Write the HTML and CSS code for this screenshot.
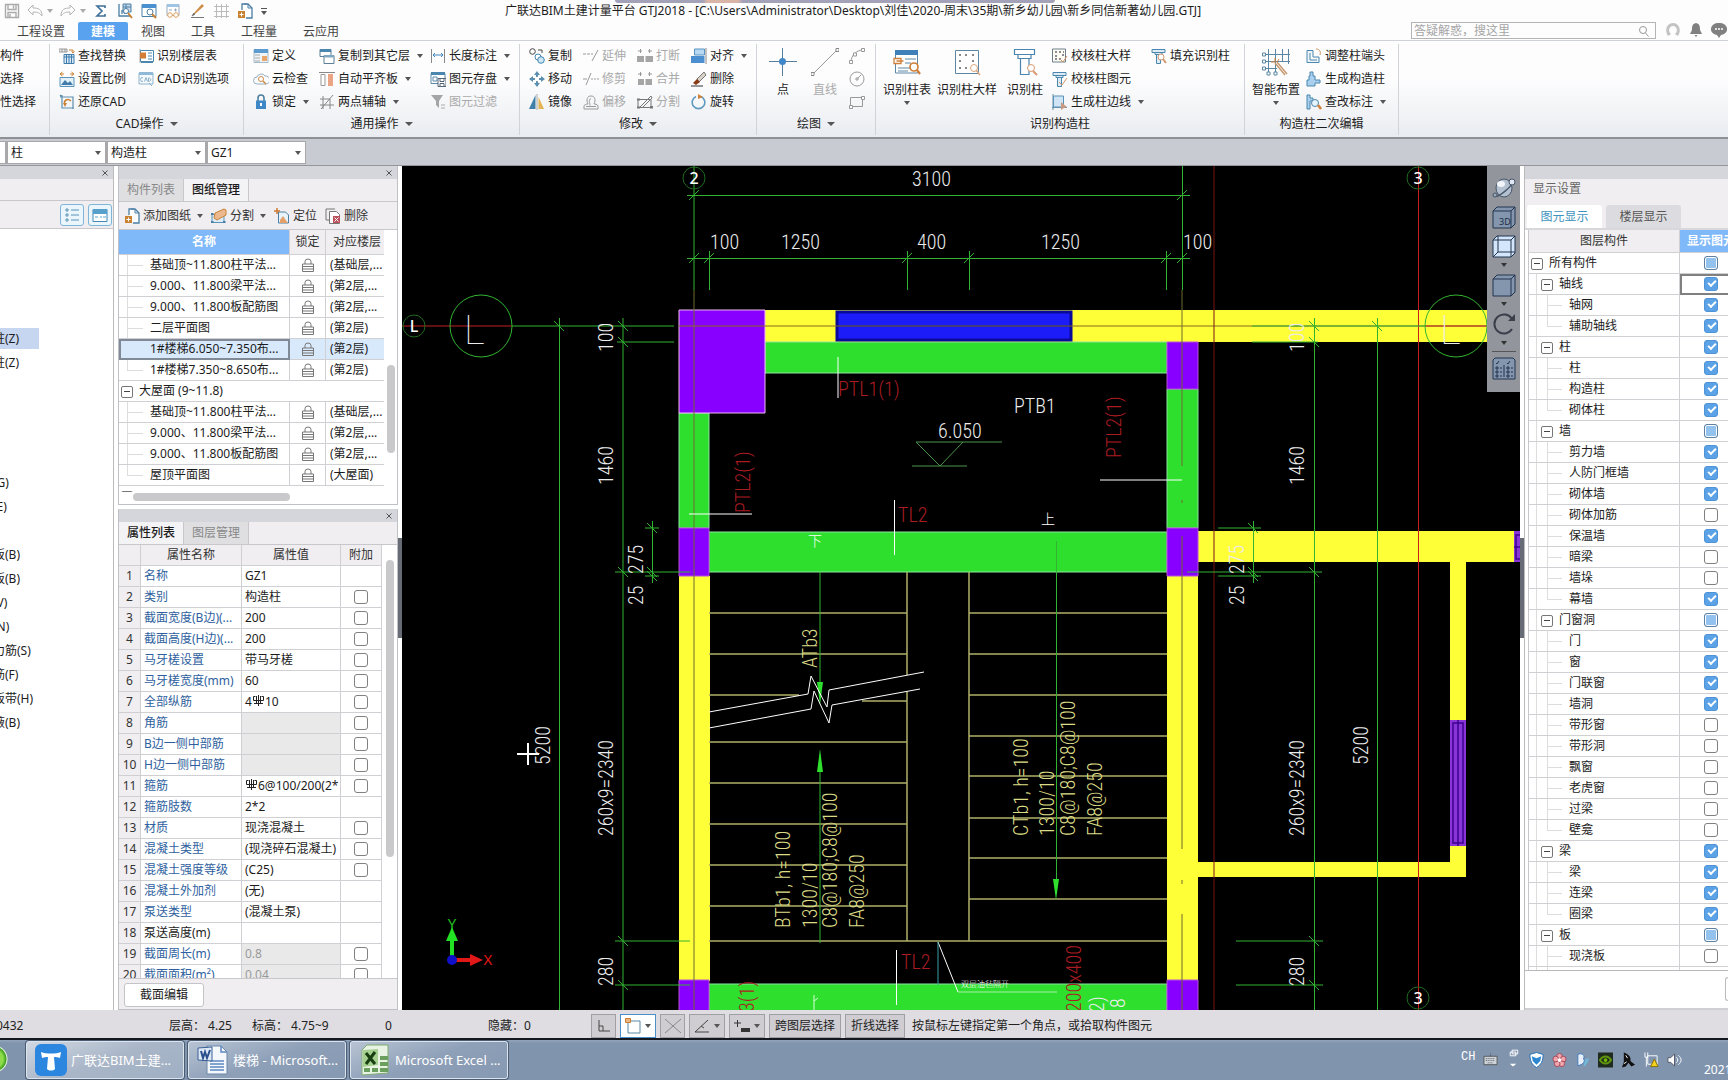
FILE: index.html
```html
<!DOCTYPE html>
<html lang="zh-CN">
<head>
<meta charset="utf-8">
<title>广联达BIM土建计量平台 GTJ2018</title>
<link rel="stylesheet" href="styles.css">
</head>
<body>
<svg class="defs" aria-hidden="true">
  <symbol id="i-lock" viewBox="0 0 12 14"><path d="M3 6V3.500a3 2.500 0 0 1 6 0V6M.5 6h11v7.500H.5zM.5 8.500h11M.5 11h11" fill="none" stroke="#777"/></symbol>
  <symbol id="i-rebar" viewBox="0 0 11 11"><path d="M5.500 0v11M2.500 1.500h-2v4h10v-4h-2M3.500 1v7M7.500 1v7M1 8.500h9" fill="none" stroke="#222"/></symbol>
  <symbol id="i-addfile" viewBox="0 0 16 16"><path d="M5 7V1h6l4 4v10H9" fill="#fff" stroke="#4a7fa5" stroke-width="1.300"/><path d="M11 1v4h4M7 1h3" fill="none" stroke="#4a7fa5"/><path d="M1 8h7v7H1z" fill="#c98132"/><path d="M4.500 9.500v4M2.500 11.500h4" stroke="#fff"/></symbol>
  <symbol id="i-column" viewBox="0 0 16 16"><path d="M1 1.500h13v3H1zM4 4.500h7v2H4zM5.500 6.500v9h4v-9" fill="#dcebf5" stroke="#4a86ad"/></symbol>
</svg>
<div class="app">
  <header class="titlebar">
    <div class="quick">
      <button aria-label="保存"><svg viewBox="0 0 16 16"><path d="M1.500 1.500h13v13h-13zM4 1.500v5h8v-5M4 14.500v-5h8v5M9.500 2.500v3M6 11v3" fill="none" stroke="#aaa" stroke-width="1.400"/></svg></button>
      <button aria-label="撤销"><svg viewBox="0 0 16 16"><path d="M1 7l5-5v3c5 0 9 1 9 8-2-3-4-4-9-4v3z" fill="none" stroke="#b5b5b5"/></svg><i class="caret pale"></i></button>
      <button aria-label="重做"><svg viewBox="0 0 16 16"><path d="M15 7l-5-5v3c-5 0-9 1-9 8 2-3 4-4 9-4v3z" fill="none" stroke="#b5b5b5"/></svg><i class="caret pale"></i></button>
      <button aria-label="汇总"><svg viewBox="0 0 16 16"><path d="M12 5V3H4l5 5-5 5h8v-2" fill="none" stroke="#3d6f96" stroke-width="1.600"/></svg></button>
      <button aria-label="查看报表"><svg viewBox="0 0 16 16"><path d="M2 1v12h12M5 11V7M7.500 11V6" fill="none" stroke="#4a7fa5" stroke-width="1.300"/><path d="M6 1h8v8H6zM6 4h8M9 1v8" fill="#c6d8e8" stroke="#4a7fa5"/><circle cx="9" cy="8" r="2.500" fill="#fff" stroke="#4a7fa5"/><path d="M11 10l4 5" stroke="#c98132" stroke-width="2"/></svg></button>
      <button aria-label="查看工程量"><svg viewBox="0 0 16 16"><path d="M1 1.500h14v12H1z" fill="#fff" stroke="#4a7fa5"/><path d="M1 1h14v4H1z" fill="#4a8fd0"/><circle cx="9" cy="9" r="3" fill="#fff" stroke="#4a7fa5"/><path d="M11 11l4 4" stroke="#c98132" stroke-width="2"/></svg></button>
      <button aria-label="查看计算式"><svg viewBox="0 0 16 16"><path d="M2 1.500h12v11H2z" fill="#fff" stroke="#9ab"/><path d="M2 1h12v3H2z" fill="#9fc4e4"/><path d="M4 7h3M9 7h3M10.500 5.500v3" stroke="#9ab"/><circle cx="5" cy="12" r="2.300" fill="#fff" stroke="#e0a060"/><circle cx="11" cy="12" r="2.300" fill="#fff" stroke="#e0a060"/></svg></button>
      <button aria-label="修改"><svg viewBox="0 0 16 16"><path d="M5 10l8-9 2 2-9 8z" fill="#d08c45"/><path d="M3 13l2-3 1 1zM2 14.500h13" fill="#555" stroke="#777"/></svg></button>
      <button aria-label="轴网"><svg viewBox="0 0 16 16"><path d="M1 3.500h15M1 8.500h15M1 13.500h15M3.500 1v14M8.500 1v14M13.500 1v14" stroke="#bbb"/></svg></button>
      <button aria-label="添加图纸"><svg viewBox="0 0 16 16"><use href="#i-addfile"/></svg></button>
      <button aria-label="更多"><i class="caret bar"></i></button>
    </div>
    <h1>广联达BIM土建计量平台 GTJ2018 - [C:\Users\Administrator\Desktop\刘佳\2020-周末\35期\新乡幼儿园\新乡同信新著幼儿园.GTJ]</h1>
    <div class="peek"></div>
  </header>

  <nav class="tabs">
    <a href="#">工程设置</a><a href="#" class="on">建模</a><a href="#">视图</a><a href="#">工具</a><a href="#">工程量</a><a href="#">云应用</a>
    <form class="search"><input type="text" aria-label="搜索" placeholder="答疑解惑，搜这里"><svg viewBox="0 0 12 12"><circle cx="5" cy="5" r="3.500" fill="none" stroke="#999"/><path d="M7.500 8l3 3.500" stroke="#999"/></svg></form>
    <div class="user">
      <svg viewBox="0 0 16 16"><path d="M3 14C-1 8 2 1 8 1s9 7 5 13l-3-2c4-4 1-8-2-8s-6 4-2 8z" fill="#c4c4c4"/></svg>
      <svg viewBox="0 0 16 16"><path d="M8 1c4 1 4 4 4 7l2 4H2l2-4c0-3 0-6 4-7zM6.500 13h3l-1.500 2z" fill="#808080"/></svg>
      <svg viewBox="0 0 16 16"><path d="M8 1a7 6 0 0 1 2 12l-2 3-2-3A7 6 0 0 1 8 1z" fill="#808080"/><path d="M4 7h2M7 7h2M10 7h2" stroke="#fff" stroke-width="1.500"/></svg>
    </div>
  </nav>

  <section class="ribbon">
    <div class="group g0"><div class="gbody"><div class="cols"><button>构件</button><button>选择</button><button>性选择</button></div></div></div>

    <div class="group g1"><div class="gbody"><div class="cols">
      <button><svg viewBox="0 0 16 16"><path d="M0 1h8v3H0zM3 1v3M6 1v3" fill="#eee" stroke="#999"/><path d="M10 2h4v3M12.500 3.500L14 5l1.500-1.500" fill="none" stroke="#c98132"/><path d="M5 6.500h10v9H5zM7.500 6.500v9M10 6.500v9M12.500 6.500v9M5 9h10" fill="#d7e7f3" stroke="#3f7cab"/></svg>查找替换</button>
      <button><svg viewBox="0 0 16 16"><path d="M2 1v14" stroke="#aaa"/><path d="M2.500 2.500h13v11h-13z" fill="#fff" stroke="#4a86ad"/><path d="M2 4.500h6v6H2z" fill="#d27c36"/><path d="M10 5h4M10 8h4M10 11h4M3 14.500h12" stroke="#4a86ad"/></svg>识别楼层表</button>
      <button><svg viewBox="0 0 16 16"><path d="M1 3h4M3.500 1L1 3l2.500 2M15 3h-4M12.500 1L15 3l-2.500 2" fill="none" stroke="#c98132"/><path d="M1 6.500h14v9H1z" fill="#e5f1f9" stroke="#5b93b8"/><path d="M2 14l4-5 3 3 2-2 3 4z" fill="#3f7cab"/></svg>设置比例</button>
      <button><svg viewBox="0 0 16 16"><path d="M1 2h14v11H1z" fill="#f3f9fc" stroke="#8fb4cc"/><path d="M1 1h14v3H1z" fill="#8fb9d6"/><path d="M5 7a1.500 2 0 1 0 0 3M6.500 10.500l1.500-4 1.500 4M10.500 7v3.500c3 0 3-3.500 0-3.500M11 12l3 3" fill="none" stroke="#8fb0c6"/></svg>CAD识别选项</button>
      <button><svg viewBox="0 0 16 16"><path d="M3 1v13h12M1 3h13v12M3 3L1 1" fill="none" stroke="#5f8fae" stroke-width="1.200"/><path d="M6 11c-2-5 3-7 6-4" fill="none" stroke="#c98132" stroke-width="1.600"/><path d="M8 9l-4 0 2 4z" fill="#c98132"/></svg>还原CAD</button>
    </div></div><div class="glabel">CAD操作<i class="caret"></i></div></div>

    <div class="group g2"><div class="gbody"><div class="cols">
      <button><svg viewBox="0 0 16 16"><path d="M1 1.500h14v13H1z" fill="#eef4f8" stroke="#a5bac8"/><path d="M1 1h14v4H1z" fill="#5b9bd0"/><path d="M2 7h5M2 10h5M2 13h5" stroke="#aaa"/><path d="M9 8h5v5H9z" fill="#e9a668"/></svg>定义</button>
      <button><svg viewBox="0 0 16 16"><path d="M1 1.500h11v7H1z" fill="#fff" stroke="#5b7f97"/><path d="M1 1h11v3H1z" fill="#4a86ad"/><path d="M5 7.500h10v8H5z" fill="#fff" stroke="#5b7f97"/><path d="M5 7h10v2.500H5z" fill="#7ea7c0"/></svg>复制到其它层<i class="caret"></i></button>
      <button><svg viewBox="0 0 16 16"><path d="M1.500 1v14M14.500 1v14" stroke="#888"/><path d="M3 7h10M5 5L3 7l2 2M11 5l2 2-2 2" fill="none" stroke="#3f87c0"/></svg>长度标注<i class="caret"></i></button>
      <button><svg viewBox="0 0 16 16"><path d="M4 13a3.500 3.500 0 0 1 0-7 4.500 4.500 0 0 1 8-1 4 4 0 0 1 1 8z" fill="#f7fbfe" stroke="#9ab0c0"/><circle cx="8" cy="8" r="2.500" fill="#fff" stroke="#d08c45"/><path d="M10 10l3 3" stroke="#d08c45" stroke-width="1.500"/></svg>云检查</button>
      <button><svg viewBox="0 0 16 16"><path d="M0 1.500h16" stroke="#888"/><path d="M2 3.500h4v11H2z" fill="#fff" stroke="#999"/><path d="M9 3h5v12H9z" fill="#eba584"/></svg>自动平齐板<i class="caret"></i></button>
      <button><svg viewBox="0 0 16 16"><path d="M1 2.500h14v10H1z" fill="#fff" stroke="#5b8aa8"/><path d="M1 1h14v3H1z" fill="#4a86ad"/><path d="M3 6h4v4H3z" fill="none" stroke="#5b8aa8"/><path d="M8 7.500h8v8H8zM10 7.500v3h4v-3M10 15v-2.500h4V15" fill="#fff" stroke="#567"/></svg>图元存盘<i class="caret"></i></button>
      <button><svg viewBox="0 0 16 16"><path d="M5 7V4a3 3 0 0 1 6 0v3" fill="none" stroke="#4d7f9f" stroke-width="1.600"/><path d="M3 6.500h10V15H3z" fill="#3f88c5"/><path d="M8 9v3" stroke="#fff" stroke-width="2"/></svg>锁定<i class="caret"></i></button>
      <button><svg viewBox="0 0 16 16"><path d="M1 11h14M1 5h10M4 2v13M11 5v10M2 15L14 1" fill="none" stroke="#888"/></svg>两点辅轴<i class="caret"></i></button>
      <button class="off"><svg viewBox="0 0 16 16"><path d="M1 1h12L9 7v7l-3-3V7z" fill="#a5a5a5"/><path d="M11 11h4M11 14h4" stroke="#aaa"/></svg>图元过滤</button>
    </div></div><div class="glabel">通用操作<i class="caret"></i></div></div>

    <div class="group g3"><div class="gbody"><div class="cols">
      <button><svg viewBox="0 0 16 16"><circle cx="3.500" cy="3.500" r="2.800" fill="none" stroke="#444"/><path d="M9 2h4v3" fill="none" stroke="#444"/><circle cx="9" cy="9" r="3" fill="#fff" stroke="#3f87b0"/><circle cx="12" cy="12" r="3.300" fill="#cfe6f5" stroke="#3f87b0"/></svg>复制</button>
      <button class="off"><svg viewBox="0 0 16 16"><path d="M0 6h3M4 6h3M8 6h2M9 13l6-11" stroke="#999" fill="none"/></svg>延伸</button>
      <button class="off"><svg viewBox="0 0 16 16"><path d="M0 8h7v6H0zM8.500 8H16v6H8.500z" fill="#a5a5a5"/><path d="M1 3h4M3.500 1v4M11 3h4M12.500 1v4" stroke="#999"/></svg>打断</button>
      <button><svg viewBox="0 0 16 16"><path d="M3.500 1h10v6h-10z" fill="#b7d8f2" stroke="#5b93c0"/><path d="M0 8h13.500v7H0z" fill="#4b8fd0"/><path d="M15 0v16" stroke="#888"/></svg>对齐<i class="caret"></i></button>
      <button><svg viewBox="0 0 16 16"><path d="M8 0l3 4H9v3h3V5l4 3-4 3V9H9v3h2l-3 4-3-4h2V9H4v2L0 8l4-3v2h3V4H5z" fill="#5a8eb0"/><circle cx="8" cy="8" r="2.200" fill="#fff"/></svg>移动</button>
      <button class="off"><svg viewBox="0 0 16 16"><path d="M0 8h4M3 14l5-12M8 8h2M11 8h2M14 8h2" stroke="#999"/></svg>修剪</button>
      <button class="off"><svg viewBox="0 0 16 16"><path d="M1 8h6v6H1zM8.500 8H15v6H8.500z" fill="#a5a5a5"/><path d="M1 3h4M3.500 1v4M11 3h4M12.500 1v4" stroke="#999"/></svg>合并</button>
      <button><svg viewBox="0 0 16 16"><path d="M6 8l7-7 2 3-7 7z" fill="#d8d2c8" stroke="#777"/><path d="M2 12l4-4 3 3-4 3z" fill="#8b3a16"/><path d="M0 15h12" stroke="#333"/></svg>删除</button>
      <button><svg viewBox="0 0 16 16"><path d="M6.500 1v14H0z" fill="#3f80ab"/><path d="M9.500 3v12H15z" fill="#e3b451"/><path d="M8 0v16" stroke="#aaa"/></svg>镜像</button>
      <button class="off"><svg viewBox="0 0 16 16"><path d="M1 15h14v-3c-1-2-3-2-4-2 2-4 1-8-3-8S3 6 5 10c-2 0-4 1-4 2zM3 12.500h10M8 4.500c-3 1-1 5-1 7" fill="none" stroke="#999"/></svg>偏移</button>
      <button class="off"><svg viewBox="0 0 16 16"><path d="M1 5.500h13v8H1zM2 14l12-12 1 2L5 14" fill="none" stroke="#777"/><path d="M0 4.500h3v2H0zM13 12h3v2.500h-3zM0 12.500h3v2H0z" fill="#777"/></svg>分割</button>
      <button><svg viewBox="0 0 16 16"><path d="M10 2.500a6.300 6.300 0 1 1-5 0" fill="none" stroke="#5f9ac0" stroke-width="1.600"/><path d="M7 0l5 3-5 2z" fill="#d08038"/></svg>旋转</button>
    </div></div><div class="glabel">修改<i class="caret"></i></div></div>

    <div class="group g4"><div class="gbody">
      <button class="big"><svg viewBox="0 0 28 28"><path d="M13.500 0v28M0 13.500h28" stroke="#557f9d"/><circle cx="13.500" cy="13.500" r="3.500" fill="#4287c8"/></svg>点</button>
      <button class="big off"><svg viewBox="0 0 28 28"><path d="M2 26L26 2" stroke="#999"/><path d="M0 24.500h3v3H0zM25 .5h3v3h-3z" fill="#fff" stroke="#888"/></svg>直线</button>
      <div class="mini">
        <button aria-label="弧线"><svg viewBox="0 0 16 16"><path d="M2 14C2 8 7 2 14 2" fill="none" stroke="#999"/><path d="M.5 12.500h3v3h-3zM4.500 5h3v3h-3zM12.500.5h3v3h-3z" fill="#fff" stroke="#999"/></svg></button>
        <button aria-label="圆"><svg viewBox="0 0 16 16"><circle cx="8" cy="8" r="7" fill="none" stroke="#999"/><path d="M7 7h2v2H7zM9 7l3-3" fill="none" stroke="#999"/></svg></button>
        <button aria-label="矩形"><svg viewBox="0 0 16 16"><path d="M1.500 3.500h12v9h-12z" fill="none" stroke="#999"/><path d="M.5 11.500h3v3h-3zM12.500 2.500h3v3h-3z" fill="#fff" stroke="#999"/></svg></button>
      </div>
    </div><div class="glabel">绘图<i class="caret"></i></div></div>

    <div class="group g5"><div class="gbody">
      <button class="big w56"><svg viewBox="0 0 28 28"><path d="M2.500 3h22v22h-22z" fill="#fff" stroke="#5b87a5"/><path d="M2 2h23v5H2z" fill="#3f80b8"/><path d="M12 11h11M12 15h6M5 20h12M5 23h10" stroke="#5b87a5"/><path d="M1 10.500h7v5H1zM3.500 13h7" fill="#fff" stroke="#d08038" stroke-width="1.300"/><circle cx="21" cy="19" r="4" fill="#fff" stroke="#d08038" stroke-width="1.700"/><path d="M24 22l3 4" stroke="#d08038" stroke-width="2.200"/></svg>识别柱表<i class="caret"></i></button>
      <button class="big w64"><svg viewBox="0 0 28 28"><path d="M2.500 2.500h23v23h-23z" fill="#fff" stroke="#5b87a5"/><path d="M6 6h2v2H6zM12 6h2v2h-2zM19 6h2v2h-2zM6 12h2v2H6zM6 19h2v2H6zM12 19h2v2h-2zM19 12h2v2h-2z" fill="#888"/><circle cx="21" cy="20" r="3.500" fill="#fff" stroke="#dfa77c"/><path d="M23 22l4 5" stroke="#dfa77c" stroke-width="1.500"/></svg>识别柱大样</button>
      <button class="big w52"><svg viewBox="0 0 28 28"><path d="M3.500 1.500h20v5h-20zM7 6.500h13v4H7zM9.500 10.500v16H18v-16" fill="#fff" stroke="#4a86ad" stroke-width="1.200"/><circle cx="20" cy="20" r="3.500" fill="#fff" stroke="#d99a70"/><path d="M22 23l4 4" stroke="#d99a70" stroke-width="2"/></svg>识别柱</button>
      <div class="cols">
        <button><svg viewBox="0 0 16 16"><path d="M.5 1h13v13H.5z" fill="#fffdf2" stroke="#6b7f8b"/><path d="M3 4h2M7 4h2M11 4h1M3 8h2M3 11h2M7 11h2M10 7h2" stroke="#667" stroke-width="1.500"/><path d="M8 11l3 3 4-6" fill="none" stroke="#cc9468"/></svg>校核柱大样</button>
        <button><svg viewBox="0 0 16 16"><use href="#i-column"/><circle cx="10" cy="9" r="3" fill="#fff" stroke="#d39a70"/><path d="M12 11l3 4" stroke="#d39a70" stroke-width="2"/></svg>填充识别柱</button>
        <button><svg viewBox="0 0 16 16"><use href="#i-column"/><path d="M7 11l3 3 5-7" fill="none" stroke="#cc9468"/></svg>校核柱图元</button>
        <i></i>
        <button><svg viewBox="0 0 16 16"><path d="M1 0v16M0 13.500h15" stroke="#6a8ea6"/><path d="M1.500 2h10v11h-10z" fill="#cfe4f5" stroke="#5b93b8"/><path d="M9 8l6 5-3 1-3 2z" fill="#c99a80"/></svg>生成柱边线<i class="caret"></i></button>
      </div>
    </div><div class="glabel">识别构造柱</div></div>

    <div class="group g6"><div class="gbody">
      <button class="big w60"><svg viewBox="0 0 28 28"><path d="M1 6.500h27M1 13.500h27M1 20.500h14M6.500 1v24M13.500 1v24M20.500 1v12M26.500 1v15" stroke="#5b87a5"/><path d="M.5 5h3v3h-3zM.5 12h3v3h-3zM.5 19h3v3h-3zM5 24h3v3H5zM12 24h3v3h-3z" fill="#fff" stroke="#5b87a5"/><path d="M13 15l10 12M15 14l10 12" stroke="#c79a70" stroke-width="1.500"/><path d="M13 10v4M9 14h4M17 11l-2 3" stroke="#d08038"/></svg>智能布置<i class="caret"></i></button>
      <div class="cols">
        <button><svg viewBox="0 0 16 16"><path d="M1 2.500h6V9h6v5.500H1zM4 5v7h7" fill="#eef5fa" stroke="#4a86ad"/><path d="M10 1c4 0 5 3 4 6" fill="none" stroke="#cc9468"/></svg>调整柱端头</button>
        <button><svg viewBox="0 0 16 16"><path d="M4 1h3v4h2v4h5v3H9v3H1V9h2V5h1z" fill="#a9d0ee" stroke="#4a86ad"/></svg>生成构造柱</button>
        <button><svg viewBox="0 0 16 16"><path d="M1 1h3v3h3v3H4v8H1z" fill="#a9d0ee" stroke="#4a86ad"/><circle cx="9" cy="9" r="3.500" fill="#e6f3fb" stroke="#4a86ad"/><path d="M12 11l3 4" stroke="#d08038" stroke-width="2.500"/></svg>查改标注<i class="caret"></i></button>
      </div>
    </div><div class="glabel">构造柱二次编辑</div></div>
  </section>

  <div class="pickers">
    <span class="pick edge"></span>
    <span class="pick"><select aria-label="构件类型"><option>柱</option></select><i class="caret"></i></span>
    <span class="pick"><select aria-label="构件种类"><option>构造柱</option></select><i class="caret"></i></span>
    <span class="pick"><select aria-label="构件名称"><option>GZ1</option></select><i class="caret"></i></span>
  </div>

  <main class="work">
    <aside class="nav">
      <div class="cap"><button aria-label="关闭"><svg viewBox="0 0 8 8"><path d="M1.500 1.500l5 5M6.500 1.500l-5 5" stroke="#555"/></svg></button></div>
      <div class="navtitle"></div>
      <div class="navtools">
        <button aria-label="列表"><svg viewBox="0 0 16 16"><path d="M2 2h2v2H2zM2 7h2v2H2zM2 12h2v2H2zM7 3h8M7 8h8M7 13h8" fill="none" stroke="#5b93b8"/></svg></button>
        <button aria-label="图块"><svg viewBox="0 0 16 16"><path d="M1 2.500h14v12H1z" fill="#fff" stroke="#3f88b8"/><path d="M1 2h14v5H1z" fill="#58a0cc"/><path d="M3 10h3M8 10h2M11 10h3" stroke="#58a0cc"/></svg></button>
      </div>
      <ul>
        <li class="on">构造柱(Z)</li><li>砌体柱(Z)</li><li></li><li></li><li></li><li></li><li>连梁(G)</li><li>圈梁(E)</li><li></li><li>现浇板(B)</li><li>螺旋板(B)</li><li>柱帽(V)</li><li>板洞(N)</li><li>板受力筋(S)</li><li>板负筋(F)</li><li>楼层板带(H)</li><li>板加腋(B)</li>
      </ul>
    </aside>

    <div class="dock">
      <section class="panel drawings">
        <div class="cap"><button aria-label="关闭"><svg viewBox="0 0 8 8"><path d="M1.500 1.500l5 5M6.500 1.500l-5 5" stroke="#555"/></svg></button></div>
        <div class="ptabs"><button>构件列表</button><button class="on">图纸管理</button></div>
        <div class="ptools">
          <button><svg viewBox="0 0 16 16"><use href="#i-addfile"/></svg>添加图纸<i class="caret"></i></button>
          <button><svg viewBox="0 0 16 16"><path d="M1 6.500h12v8H1z" fill="#dcebf5" stroke="#5b93b8"/><path d="M4 5l9-4 2 1v5l-9 5-3-2z" fill="#ecb98e" stroke="#c98132"/><path d="M0 5h2.500v2H0zM0 13h2.500v2H0zM12 13h2.500v2H12z" fill="#4a7fa5"/></svg>分割<i class="caret"></i></button>
          <button><svg viewBox="0 0 16 16"><path d="M4.500 4h7l3 3v8h-10z" fill="#e7f2fa" stroke="#4a7fa5"/><path d="M3 0v6M0 3h6" stroke="#d07a30" stroke-width="1.500"/><path d="M6 12l3-4 2 3 3 4H6z" fill="#e3a06a"/></svg>定位</button>
          <button><svg viewBox="0 0 16 16"><path d="M4 12H1V1h9" fill="none" stroke="#777"/><path d="M4.500 3.500h7l3 3v9h-10z" fill="#fff" stroke="#777"/><path d="M8 8h7v7H8z" fill="#b9505a"/><path d="M9.500 9.500l4 4M13.500 9.500l-4 4" stroke="#fff"/></svg>删除</button>
        </div>
        <div class="scroller">
          <table class="sheet">
            <colgroup><col class="c1"><col class="c2"><col class="c3"></colgroup>
            <thead><tr><th class="hot">名称</th><th>锁定</th><th>对应楼层</th></tr></thead>
            <tbody>
            <tr><td class="leaf">基础顶~11.800柱平法...</td><td><svg><use href="#i-lock"/></svg></td><td>(基础层,...</td></tr>
            <tr><td class="leaf">9.000、11.800梁平法...</td><td><svg><use href="#i-lock"/></svg></td><td>(第2层,...</td></tr>
            <tr><td class="leaf">9.000、11.800板配筋图</td><td><svg><use href="#i-lock"/></svg></td><td>(第2层,...</td></tr>
            <tr><td class="leaf">二层平面图</td><td><svg><use href="#i-lock"/></svg></td><td>(第2层)</td></tr>
            <tr class="sel"><td class="leaf">1#楼梯6.050~7.350布...</td><td><svg><use href="#i-lock"/></svg></td><td>(第2层)</td></tr>
            <tr><td class="leaf last">1#楼梯7.350~8.650布...</td><td><svg><use href="#i-lock"/></svg></td><td>(第2层)</td></tr>
            <tr><td colspan="3" class="branch"><button class="fold" aria-label="折叠"></button>大屋面 (9~11.8)</td></tr>
            <tr><td class="leaf">基础顶~11.800柱平法...</td><td><svg><use href="#i-lock"/></svg></td><td>(基础层,...</td></tr>
            <tr><td class="leaf">9.000、11.800梁平法...</td><td><svg><use href="#i-lock"/></svg></td><td>(第2层,...</td></tr>
            <tr><td class="leaf">9.000、11.800板配筋图</td><td><svg><use href="#i-lock"/></svg></td><td>(第2层,...</td></tr>
            <tr><td class="leaf last">屋顶平面图</td><td><svg><use href="#i-lock"/></svg></td><td>(大屋面)</td></tr>
            <tr><td colspan="3" class="branch"><button class="fold" aria-label="折叠"></button></td></tr>
            </tbody>
          </table>
          <div class="vbar v1"><span></span></div>
        </div>
        <div class="hbar"><span></span></div>
      </section>

      <section class="panel props">
        <div class="cap"><button aria-label="关闭"><svg viewBox="0 0 8 8"><path d="M1.500 1.500l5 5M6.500 1.500l-5 5" stroke="#555"/></svg></button></div>
        <div class="ptabs"><button class="on">属性列表</button><button>图层管理</button></div>
        <div class="scroller">
          <table class="attr">
            <colgroup><col class="n"><col class="k"><col class="v"><col class="a"></colgroup>
            <thead><tr><th></th><th>属性名称</th><th>属性值</th><th>附加</th></tr></thead>
            <tbody>
            <tr><th>1</th><td>名称</td><td>GZ1</td><td></td></tr>
            <tr><th>2</th><td><label for="p2">类别</label></td><td>构造柱</td><td><input type="checkbox" id="p2"></td></tr>
            <tr><th>3</th><td><label for="p3">截面宽度(B边)(...</label></td><td>200</td><td><input type="checkbox" id="p3"></td></tr>
            <tr><th>4</th><td><label for="p4">截面高度(H边)(...</label></td><td>200</td><td><input type="checkbox" id="p4"></td></tr>
            <tr><th>5</th><td><label for="p5">马牙槎设置</label></td><td>带马牙槎</td><td><input type="checkbox" id="p5"></td></tr>
            <tr><th>6</th><td><label for="p6">马牙槎宽度(mm)</label></td><td>60</td><td><input type="checkbox" id="p6"></td></tr>
            <tr><th>7</th><td><label for="p7">全部纵筋</label></td><td>4<svg class="rebar"><use href="#i-rebar"/></svg>10</td><td><input type="checkbox" id="p7"></td></tr>
            <tr><th>8</th><td><label for="p8">角筋</label></td><td class="dim"></td><td><input type="checkbox" id="p8"></td></tr>
            <tr><th>9</th><td><label for="p9">B边一侧中部筋</label></td><td class="dim"></td><td><input type="checkbox" id="p9"></td></tr>
            <tr><th>10</th><td><label for="p10">H边一侧中部筋</label></td><td class="dim"></td><td><input type="checkbox" id="p10"></td></tr>
            <tr><th>11</th><td><label for="p11">箍筋</label></td><td><svg class="rebar"><use href="#i-rebar"/></svg>6@100/200(2*</td><td><input type="checkbox" id="p11"></td></tr>
            <tr><th>12</th><td>箍筋肢数</td><td>2*2</td><td></td></tr>
            <tr><th>13</th><td><label for="p13">材质</label></td><td>现浇混凝土</td><td><input type="checkbox" id="p13"></td></tr>
            <tr><th>14</th><td><label for="p14">混凝土类型</label></td><td>(现浇碎石混凝土)</td><td><input type="checkbox" id="p14"></td></tr>
            <tr><th>15</th><td><label for="p15">混凝土强度等级</label></td><td>(C25)</td><td><input type="checkbox" id="p15"></td></tr>
            <tr><th>16</th><td>混凝土外加剂</td><td>(无)</td><td></td></tr>
            <tr><th>17</th><td>泵送类型</td><td>(混凝土泵)</td><td></td></tr>
            <tr><th>18</th><td class="own">泵送高度(m)</td><td></td><td></td></tr>
            <tr><th>19</th><td><label for="p19">截面周长(m)</label></td><td class="dim">0.8</td><td><input type="checkbox" id="p19"></td></tr>
            <tr><th>20</th><td><label for="p20">截面面积(m²)</label></td><td class="dim">0.04</td><td><input type="checkbox" id="p20"></td></tr>
            </tbody>
          </table>
          <div class="vbar v2"><span></span></div>
        </div>
        <div class="pfoot"><button>截面编辑</button></div>
      </section>
    </div>

    <div class="split"><span></span></div>

    <section class="canvas">
      <svg class="cad" viewBox="402 166 1118 844" preserveAspectRatio="xMidYMid slice">
        <defs>
          <path id="th" d="M-5 5L5-5"/>
          <path id="tv" d="M-5-5L5 5"/>
        </defs>
        <!-- walls -->
        <g fill="#ffff38">
          <path d="M765 310h755v32H765zM679 576h31v405h-31zM1167 576h31v405h-31zM1198 531h316v31h-316zM1450 562h16v315h-16zM1198 862h268v15h-268z"/>
        </g>
        <!-- beams -->
        <g fill="#2edf2e" stroke="#8ce6a0">
          <path d="M765 342h402v31H765zM679 413h30v115h-30zM1167 389h31v139h-31zM709 532h458v40H709zM709 984h458v30H709z"/>
        </g>
        <!-- columns -->
        <g fill="#8800ff" stroke="#b850d8">
          <path d="M679 528h30v48h-30zM1167 342h31v47h-31zM1167 528h31v48h-31zM679 980h30v34h-30zM1167 980h31v34h-31z"/>
          <path d="M679 310h86v103h-86z" stroke="#f0b8f0"/>
        </g>
        <!-- windows -->
        <path d="M837 312h234v28H837z" fill="#1c1cf8" stroke="#0a0a9a" stroke-width="3"/>
        <path d="M1450 720h16v126h-16z" fill="#8a35d8"/><path d="M1453 723h10v120h-10zM1458 720v126" fill="none" stroke="#3c0090" stroke-width="1.500"/>
        <path d="M1514 531h6v31h-6z" fill="#8a35d8"/><path d="M1520 535h-4v24h4M1514 547h6" fill="none" stroke="#3c0090" stroke-width="1.500"/>
        <!-- stairs -->
        <g stroke="#b0b06a" fill="none" stroke-width="1.500">
          <path d="M709 613h198M709 654h198M709 695h90M862 701h45M709 742h198M709 783h198M709 824h198M709 865h198M709 906h198M709 941h458M907 572v103M907 691v250M969 572v369M969 613h198M969 654h198M969 695h198M969 736h198M969 776h198M969 818h198M969 858h198M969 899h198"/>
        </g>
        <!-- axes -->
        <g fill="none">
          <path d="M694 290v720M1182 290v176M1182 500v3M1182 536v313M1182 880v4M1182 914v96" stroke="#6c6a30"/>
          <path d="M679 326h841" stroke="#8a6a20"/>
          <path d="M836 326h236" stroke="#343468"/>
          <path d="M1214 166v844" stroke="#7a1414"/>
          <path d="M1418.500 166v844" stroke="#c81e1e"/>
          <path d="M402 326h110M1425 326h95" stroke="#c02020"/>
        </g>
        <!-- dimensions -->
        <g stroke="#32b432" fill="none">
          <path d="M694 166v124M1182.500 166v124M687 195.500h503M687 258.500h503M709.500 251v39M907.500 251v39M969.500 251v39M1166.500 251v39"/>
          <path d="M512 326h162M617 342h57M559.500 318v692M623 318v692M615 572h75M615 941h75M615 985h75M652.500 521v62M645 528h14M645 576h14"/>
          <path d="M1252 326h173M1252 342h66M1314.500 318v692M1377.500 318v692M1253.500 521v62M1218 528h43M1218 576h43M1187 572h135M1236 941h87M1236 985h87"/>
          <path d="M820 572v125M820 765v178M1056.500 541v345"/>
          <use href="#th" x="694" y="195"/><use href="#th" x="1182" y="195"/><use href="#th" x="694" y="258"/><use href="#th" x="709" y="258"/><use href="#th" x="907" y="258"/><use href="#th" x="969" y="258"/><use href="#th" x="1166" y="258"/><use href="#th" x="1182" y="258"/>
          <use href="#tv" x="559" y="326"/><use href="#tv" x="623" y="326"/><use href="#tv" x="623" y="342"/><use href="#tv" x="623" y="572"/><use href="#tv" x="623" y="941"/><use href="#tv" x="623" y="985"/><use href="#tv" x="652" y="528"/><use href="#tv" x="652" y="572"/><use href="#tv" x="652" y="576"/>
          <use href="#tv" x="1314" y="326"/><use href="#tv" x="1314" y="342"/><use href="#tv" x="1377" y="326"/><use href="#tv" x="1314" y="572"/><use href="#tv" x="1314" y="941"/><use href="#tv" x="1314" y="985"/><use href="#tv" x="1253" y="528"/><use href="#tv" x="1253" y="572"/><use href="#tv" x="1253" y="576"/>
          <circle cx="694" cy="178" r="11" stroke="#1f6a1f"/><circle cx="414" cy="326" r="11" stroke="#1f6a1f"/><circle cx="1418" cy="178" r="11" stroke="#1f6a1f"/><circle cx="1418" cy="998" r="11" stroke="#1f6a1f"/>
          <circle cx="481" cy="326" r="31"/><circle cx="1456" cy="326" r="31"/>
          <path d="M916 442h86M916 442l24 24 23-24M912 466h55" stroke="#4a944a"/>
        </g>
        <g fill="#2edf2e"><path d="M817 682h6l-3 23zM817 772h6l-3-23zM1053 879h6l-3 21z"/></g>
        <!-- break lines and leaders -->
        <g stroke="#fff" fill="none">
          <path d="M709 712l99-18 3-18 16 31 2-17 95-18M709 728l102-19 3-18 15 32 3-18 88-16"/>
          <path d="M838 357v41M689 514h63M894.500 500v55M1100 480h82M896.500 950v55M938 942l20 50"/>
          <path d="M958 992h99" stroke="#a8f0a8"/>
        </g>
        <path d="M938 942v43" stroke="#3aa0a8"/>
        <g class="t">
          <text x="912" y="186">3100</text><text x="710" y="249">100</text><text x="781" y="249">1250</text><text x="917" y="249">400</text><text x="1041" y="249">1250</text><text x="1183" y="249">100</text>
          <text x="1014" y="413">PTB1</text><text x="938" y="438">6.050</text>
          <text transform="translate(613 352) rotate(-90)">100</text><text transform="translate(613 485) rotate(-90)">1460</text><text transform="translate(643 574) rotate(-90)">275</text><text transform="translate(643 605) rotate(-90)">25</text><text transform="translate(550 765) rotate(-90)">5200</text><text transform="translate(613 836) rotate(-90)">260x9=2340</text><text transform="translate(613 986) rotate(-90)">280</text>
          <text transform="translate(1304 352) rotate(-90)">100</text><text transform="translate(1304 485) rotate(-90)">1460</text><text transform="translate(1244 574) rotate(-90)">275</text><text transform="translate(1244 605) rotate(-90)">25</text><text transform="translate(1368 765) rotate(-90)">5200</text><text transform="translate(1304 836) rotate(-90)">260x9=2340</text><text transform="translate(1304 986) rotate(-90)">280</text>
          <text transform="translate(1104 1012) rotate(-90)">2)</text><text transform="translate(1125 1008) rotate(-90)">8</text>
          <text class="big-l" x="464" y="344">L</text><text class="big-l" x="1440" y="344">L</text>
        </g>
        <g class="t red">
          <text x="838" y="396">PTL1(1)</text><text x="898" y="522">TL2</text><text x="901" y="969">TL2</text>
          <text transform="translate(750 513) rotate(-90)">PTL2(1)</text><text transform="translate(1121 458) rotate(-90)">PTL2(1)</text><text transform="translate(754 1012) rotate(-90)">3(1)</text><text transform="translate(1081 1012) rotate(-90)">200x400</text>
        </g>
        <g class="t yel">
          <text transform="translate(817 668) rotate(-90)">ATb3</text>
          <text transform="translate(790 928) rotate(-90)">BTb1, h=100</text><text transform="translate(817 928) rotate(-90)">1300/10</text><text transform="translate(837 928) rotate(-90)">C8@180;C8@100</text><text transform="translate(864 928) rotate(-90)">FA8@250</text>
          <text transform="translate(1028 836) rotate(-90)">CTb1, h=100</text><text transform="translate(1054 836) rotate(-90)">1300/10</text><text transform="translate(1075 836) rotate(-90)">C8@180;C8@100</text><text transform="translate(1102 836) rotate(-90)">FA8@250</text>
        </g>
        <g class="cn"><text x="1041" y="524">上</text><text x="808" y="546">下</text><text class="note" x="961" y="987">双层油毡隔开</text></g>
        <path d="M814 995v15M814 1001l4-3" stroke="#d8ffd8"/>
        <g class="axis"><text x="694" y="184">2</text><text x="414" y="332">L</text><text x="1418" y="184">3</text><text x="1418" y="1004">3</text></g>
        <!-- cursor and coordinate system -->
        <path d="M528 743v22M517 754h22" stroke="#fff" stroke-width="2"/>
        <path d="M452 958v-20" stroke="#22e022" stroke-width="4"/><path d="M446 941l6-14 6 14z" fill="#22e022"/>
        <path d="M456 960h16" stroke="#e01818" stroke-width="4"/><path d="M470 954l13 6-13 6z" fill="#e01818"/>
        <circle cx="452" cy="960" r="5" fill="#1010c8"/>
        <text class="ax" x="452" y="929" fill="#22c022">Y</text><text class="ax" x="488" y="965" fill="#e01818">X</text>
      </svg>
      <div class="palette">
        <button aria-label="动态观察"><svg viewBox="0 0 24 24"><ellipse cx="12" cy="12" rx="8" ry="9" fill="#b4c1d1" stroke="#47566a"/><path d="M3 20c3 2 18-10 18-15" fill="none" stroke="#47566a" stroke-width="1.300"/><circle cx="20" cy="6" r="3" fill="#dfe8f2" stroke="#47566a"/><circle cx="3" cy="19" r="2" fill="#9aa9bb" stroke="#47566a"/><ellipse cx="9" cy="8" rx="4" ry="3" fill="#f2f6fa"/></svg></button>
        <button aria-label="三维"><svg viewBox="0 0 24 24"><path d="M1 6l4-4h18v17l-4 4H1zM1 6h18v17M19 6l4-4" fill="#8496ae" stroke="#22344f"/><text x="7" y="20" font-size="9" fill="#1c2c44">3D</text></svg></button>
        <button aria-label="线框"><svg viewBox="0 0 24 24"><path d="M1 6l4-4h18v17l-4 4H1z" fill="#d4e6fb" stroke="#22344f"/><path d="M1 6h18v17M19 6l4-4M6 2v16h17M6 18l-5 5" fill="none" stroke="#22344f"/></svg></button><i class="caret"></i>
        <button aria-label="实体"><svg viewBox="0 0 24 24"><path d="M1 6l4-4h18v17l-4 4H1zM1 6h18v17M19 6l4-4" fill="#8496ae" stroke="#22344f"/></svg></button><i class="caret"></i>
        <button aria-label="旋转视图"><svg viewBox="0 0 24 24"><path d="M20 7a9.500 9.500 0 1 0 0 10" fill="none" stroke="#3a3f4a" stroke-width="2"/><path d="M23 2v7h-7z" fill="#3a3f4a"/></svg></button><i class="caret"></i>
        <hr>
        <button aria-label="显示设置"><svg viewBox="0 0 24 24"><path d="M1 4l2-2h18l2 2v19H1z" fill="#8496ae" stroke="#22344f"/><path d="M12 9v12M4 11h2v2H4zM4 15h2v2H4zM4 19h2v2H4zM15 11h2v2h-2zM15 15h2v2h-2zM15 19h2v2h-2zM8 12h2M8 16h2M8 20h2M19 12h2M19 16h2M19 20h2M4 7l1 1 2-3M15 7l1 1 2-3" fill="none" stroke="#22344f"/></svg></button>
      </div>
    </section>

    <div class="split"><span></span></div>

    <aside class="display">
      <div class="cap"></div>
      <h2>显示设置</h2>
      <div class="dtabs"><button class="on">图元显示</button><button>楼层显示</button></div>
      <div class="scroller">
      <table class="layers">
        <colgroup><col class="l"><col class="s"></colgroup>
        <thead><tr><th>图层构件</th><th class="hot">显示图元</th></tr></thead>
        <tbody>
        <tr><td class="d0"><button class="fold" aria-label="折叠"></button><label for="a0">所有构件</label></td><td><input type="checkbox" class="mixed" id="a0"></td></tr>
        <tr class="cur"><td class="d1"><button class="fold" aria-label="折叠"></button><label for="a1">轴线</label></td><td><input type="checkbox" checked id="a1"></td></tr>
        <tr><td class="d2"><label for="a2">轴网</label></td><td><input type="checkbox" checked id="a2"></td></tr>
        <tr><td class="d2 last"><label for="a3">辅助轴线</label></td><td><input type="checkbox" checked id="a3"></td></tr>
        <tr><td class="d1"><button class="fold" aria-label="折叠"></button><label for="a4">柱</label></td><td><input type="checkbox" checked id="a4"></td></tr>
        <tr><td class="d2"><label for="a5">柱</label></td><td><input type="checkbox" checked id="a5"></td></tr>
        <tr><td class="d2"><label for="a6">构造柱</label></td><td><input type="checkbox" checked id="a6"></td></tr>
        <tr><td class="d2 last"><label for="a7">砌体柱</label></td><td><input type="checkbox" checked id="a7"></td></tr>
        <tr><td class="d1"><button class="fold" aria-label="折叠"></button><label for="a8">墙</label></td><td><input type="checkbox" class="mixed" id="a8"></td></tr>
        <tr><td class="d2"><label for="a9">剪力墙</label></td><td><input type="checkbox" checked id="a9"></td></tr>
        <tr><td class="d2"><label for="a10">人防门框墙</label></td><td><input type="checkbox" checked id="a10"></td></tr>
        <tr><td class="d2"><label for="a11">砌体墙</label></td><td><input type="checkbox" checked id="a11"></td></tr>
        <tr><td class="d2"><label for="a12">砌体加筋</label></td><td><input type="checkbox" id="a12"></td></tr>
        <tr><td class="d2"><label for="a13">保温墙</label></td><td><input type="checkbox" checked id="a13"></td></tr>
        <tr><td class="d2"><label for="a14">暗梁</label></td><td><input type="checkbox" id="a14"></td></tr>
        <tr><td class="d2"><label for="a15">墙垛</label></td><td><input type="checkbox" id="a15"></td></tr>
        <tr><td class="d2 last"><label for="a16">幕墙</label></td><td><input type="checkbox" checked id="a16"></td></tr>
        <tr><td class="d1"><button class="fold" aria-label="折叠"></button><label for="a17">门窗洞</label></td><td><input type="checkbox" class="mixed" id="a17"></td></tr>
        <tr><td class="d2"><label for="a18">门</label></td><td><input type="checkbox" checked id="a18"></td></tr>
        <tr><td class="d2"><label for="a19">窗</label></td><td><input type="checkbox" checked id="a19"></td></tr>
        <tr><td class="d2"><label for="a20">门联窗</label></td><td><input type="checkbox" checked id="a20"></td></tr>
        <tr><td class="d2"><label for="a21">墙洞</label></td><td><input type="checkbox" checked id="a21"></td></tr>
        <tr><td class="d2"><label for="a22">带形窗</label></td><td><input type="checkbox" id="a22"></td></tr>
        <tr><td class="d2"><label for="a23">带形洞</label></td><td><input type="checkbox" id="a23"></td></tr>
        <tr><td class="d2"><label for="a24">飘窗</label></td><td><input type="checkbox" id="a24"></td></tr>
        <tr><td class="d2"><label for="a25">老虎窗</label></td><td><input type="checkbox" id="a25"></td></tr>
        <tr><td class="d2"><label for="a26">过梁</label></td><td><input type="checkbox" id="a26"></td></tr>
        <tr><td class="d2 last"><label for="a27">壁龛</label></td><td><input type="checkbox" id="a27"></td></tr>
        <tr><td class="d1"><button class="fold" aria-label="折叠"></button><label for="a28">梁</label></td><td><input type="checkbox" checked id="a28"></td></tr>
        <tr><td class="d2"><label for="a29">梁</label></td><td><input type="checkbox" checked id="a29"></td></tr>
        <tr><td class="d2"><label for="a30">连梁</label></td><td><input type="checkbox" checked id="a30"></td></tr>
        <tr><td class="d2 last"><label for="a31">圈梁</label></td><td><input type="checkbox" checked id="a31"></td></tr>
        <tr><td class="d1"><button class="fold" aria-label="折叠"></button><label for="a32">板</label></td><td><input type="checkbox" class="mixed" id="a32"></td></tr>
        <tr><td class="d2"><label for="a33">现浇板</label></td><td><input type="checkbox" id="a33"></td></tr>
        <tr><td class="d2"></td><td><input type="checkbox" aria-label="板"></td></tr>
        </tbody>
      </table>
      </div>
      <div class="dfoot"><button aria-label="恢复默认设置"></button></div>
    </aside>
  </main>

  <footer class="status">
    <span class="s-pos">0432</span><span class="s-h">层高： 4.25</span><span class="s-e">标高： 4.75~9</span><span class="s-n">0</span><span class="s-x">隐藏：0</span>
    <div class="modes">
      <button class="m24" aria-label="正交"><svg viewBox="0 0 16 16"><path d="M3 2v11h11M3 8h4v5" fill="none" stroke="#444"/></svg></button>
      <button class="m35 on" aria-label="捕捉"><svg viewBox="0 0 16 16"><path d="M3 3h12v12H3z" fill="#fff" stroke="#5b87a5"/><path d="M.5.5h5v4h-5z" fill="#f0b483" stroke="#c98132"/></svg><i class="caret"></i></button>
      <button class="m24" aria-label="交点"><svg viewBox="0 0 16 16"><path d="M0 1l16 14M16 1L0 15" stroke="#888"/></svg></button>
      <button class="m35" aria-label="角度"><svg viewBox="0 0 16 16"><path d="M14 2L1 14h14M7 8l3 2" fill="none" stroke="#444"/></svg><i class="caret"></i></button>
      <button class="m35" aria-label="偏移"><svg viewBox="0 0 16 16"><path d="M0 5h7M3.500 2v7" stroke="#333"/><path d="M7 10h9v4H7z" fill="#333"/></svg><i class="caret"></i></button>
      <button>跨图层选择</button><button>折线选择</button>
    </div>
    <span>按鼠标左键指定第一个角点，或拾取构件图元</span>
  </footer>

  <div class="taskbar">
    <button class="orb" aria-label="开始"></button>
    <button class="task live"><svg viewBox="0 0 32 32"><rect width="32" height="32" rx="6" fill="#2b86e0"/><path d="M6 8c5 2 15 2 20 0l-1 6c-2-1-4-1-6-1l1 12c-2 2-6 2-8 0l1-12c-2 0-4 0-6 1z" fill="#fff"/></svg>广联达BIM土建...</button>
    <button class="task"><svg viewBox="0 0 32 32"><path d="M10 2h14l6 6v22H10z" fill="#f4f8fc" stroke="#6b86a8"/><path d="M24 2v6h6M13 17h14M13 20h14M13 23h14M13 26h14" fill="none" stroke="#5d86c0" stroke-width="1.500"/><path d="M1 4l14-1v14L1 16z" fill="#dfe9f5" stroke="#3a5f97"/><path d="M4 7l2 7 2-6 2 6 3-8" fill="none" stroke="#2b4f8c" stroke-width="2"/></svg>楼梯 - Microsoft...</button>
    <button class="task"><svg viewBox="0 0 32 32"><path d="M3 6l5-5h21v28l-26 2z" fill="#e8f3e4" stroke="#7fae72"/><path d="M21 12h8v4h-8zM21 18h8v4h-8zM21 24h8v4h-8zM13 24h6v4h-6zM5 24h6v4H5z" fill="#6a9f5e"/><path d="M4 6l15-1v16L4 23z" fill="#a5d08f"/><path d="M7 9l9 11M16 8L7 20" stroke="#173f12" stroke-width="3"/></svg>Microsoft Excel ...</button>
    <div class="tray">
      <span class="ime">CH</span>
      <svg viewBox="0 0 16 16"><path d="M1 4h14v9H1z" fill="#cdd3da" stroke="#555"/><path d="M3 6.500h10M3 8.500h10M5 11h6M8 4V1" stroke="#555" stroke-dasharray="1 1"/></svg>
      <svg class="tall" viewBox="0 0 16 24"><path d="M6.500 1.500h6v4h-6zM4.500 3.500h6v4h-6z" fill="#8094ae" stroke="#fff"/><path d="M4 16h7l-3.500 3z" fill="#fff"/></svg>
      <svg viewBox="0 0 16 16"><path d="M8 0l7 2c0 7-2 11-7 14C3 13 1 9 1 2z" fill="#fff" stroke="#1f6fb8"/><path d="M3 4l5 2 5-2-1 5-4 4-4-4z" fill="#2d87d0"/></svg>
      <svg viewBox="0 0 16 16"><g fill="#f0a6ae" stroke="#a44855"><circle cx="8" cy="4" r="3"/><circle cx="12" cy="7" r="3"/><circle cx="10.500" cy="12" r="3"/><circle cx="5.500" cy="12" r="3"/><circle cx="4" cy="7" r="3"/></g><circle cx="8" cy="8" r="2" fill="#fff"/></svg>
      <svg viewBox="0 0 16 16"><path d="M3 2c5-2 8 1 6 5 2 1 1 6-6 7z" fill="#e7eef8" stroke="#3a78b8"/><path d="M9 15c3-1 5-5 6-9l-4 1z" fill="#70b8d8"/></svg>
      <svg viewBox="0 0 16 16"><rect width="16" height="16" fill="#1e2b1e"/><path d="M2 8c3-5 9-5 12 0-3 5-9 5-12 0z" fill="none" stroke="#5f9410" stroke-width="2"/><circle cx="8" cy="8" r="2" fill="#76b900"/></svg>
      <svg viewBox="0 0 16 16"><path d="M3 0c6 2 8 6 7 9l5 4-4 2-3-4-3 4-4 1 2-6z" fill="#111"/><path d="M5 3l2 3M3 12l3-2" stroke="#fff"/></svg>
      <svg viewBox="0 0 16 16"><path d="M4 3.500h10v9H4z" fill="#8094ae" stroke="#fff"/><path d="M1 0v5h3V0M2.500 5v10" fill="none" stroke="#fff"/><path d="M11 7l4 8H7z" fill="#f5d020" stroke="#8a7000"/></svg>
      <svg viewBox="0 0 16 16"><path d="M1 5.500h3l4-4v13l-4-4H1z" fill="#fff" stroke="#556"/><path d="M10 5c2 2 2 4 0 6M12 3c4 3 4 7 0 10" fill="none" stroke="#fff"/></svg>
      <span class="clock">2021/1</span>
    </div>
  </div>
</div>
</body>
</html>
```

FILE: styles.css
```css
* { box-sizing: border-box; }
html, body { height: 100%; }
body { margin: 0; overflow: hidden; font: 12px/16px "Noto Sans", "Noto Sans CJK SC", sans-serif; color: #1c1c1c; background: #fff; }
button { font: inherit; color: inherit; background: none; border: 0; padding: 0; display: flex; align-items: center; white-space: nowrap; }
svg { display: block; flex: none; width: 16px; height: 16px; }
h1, h2, ul, form, hr { margin: 0; padding: 0; font-weight: 400; font-size: 12px; list-style: none; }
table { border-collapse: separate; border-spacing: 0; table-layout: fixed; }
.defs { position: absolute; width: 0; height: 0; }

.caret { flex: none; width: 0; height: 0; border: 3px solid transparent; border-top: 4px solid #555; border-bottom: 0; margin-left: 8px; }
.caret.pale { border-top-color: #aaa; margin-left: 4px; }
.caret.bar { margin: 4px 0 0; position: relative; }
.caret.bar::before { content: ""; position: absolute; left: -3px; top: -7px; width: 6px; height: 1px; background: #555; }

.app { height: 100vh; min-height: 600px; display: flex; flex-direction: column; overflow: hidden; }

/* title */
.titlebar { flex: none; height: 22px; display: flex; align-items: center; position: relative; background: #fdfdfe; }
.quick { display: flex; align-items: center; gap: 7px; width: 505px; padding-left: 4px; flex: none; }
.quick button:nth-child(n+4):not(:last-child) { width: 17px; }
.titlebar h1 { white-space: nowrap; }
.peek { position: absolute; left: 615px; top: 0; width: 440px; height: 3px; border-radius: 0 0 6px 6px; background: linear-gradient(90deg, #a3a2b8 20%, #d9b5a8 21% 28%, #a3a2b8 29%); }

/* tabs */
.tabs { flex: none; height: 19px; display: flex; align-items: stretch; border-bottom: 1px solid #cfd2d8; background: #fdfdfe; }
.tabs a { color: #444; text-decoration: none; line-height: 19px; margin-left: 26px; }
.tabs a:first-child { margin-left: 17px; }
.tabs a.on { margin: 0 -13px 0 13px; padding: 0 13px; background: #58a2ef; color: #fff; font-weight: 700; border-radius: 2px 2px 0 0; }
.search { margin-left: auto; width: 245px; height: 17px; display: flex; align-items: center; border: 1px solid #b4b4b4; padding-right: 5px; }
.search input { flex: 1; min-width: 0; border: 0; outline: 0; padding: 0 2px; height: 15px; font: inherit; line-height: 15px; background: none; }
.search input::placeholder { color: #a5a5a5; opacity: 1; }
.search svg { width: 12px; height: 12px; }
.user { display: flex; gap: 7px; padding: 0 1px 0 9px; }

/* ribbon */
.ribbon { flex: none; height: 98px; display: flex; background: linear-gradient(#fdfdfe 40%, #e9ecf0); border-bottom: 2px solid #8e9096; padding: 3px 0 2px; overflow: hidden; }
.group { flex: none; display: flex; flex-direction: column; border-right: 1px solid #d0d3d8; }
.gbody { display: flex; height: 71px; }
.cols { display: grid; grid-auto-rows: 23px; }
.cols button { gap: 3px; }
.cols .caret { margin-left: 4px; }
.glabel { display: flex; justify-content: center; align-items: center; height: 22px; }
.glabel .caret { margin-left: 6px; border-width: 4px 4px 0; }
.off { color: #aaa; }
.g0 { width: 50px; }
.g1 { width: 194px; } .g1 .cols { padding-left: 9px; grid-template-columns: 79px auto; }
.g2 { width: 276px; } .g2 .cols { padding-left: 9px; grid-template-columns: 66px 111px auto; }
.g3 { width: 237px; } .g3 .cols { padding-left: 9px; grid-template-columns: repeat(4, 54px); }
.g4 { width: 119px; } .g4 .gbody { padding-left: 5px; }
.g5 { width: 369px; } .g5 .gbody { padding-left: 3px; } .g5 .cols { padding-left: 1px; grid-template-columns: 99px auto; }
.g6 { width: 154px; } .g6 .gbody { padding-left: 1px; }
.big { flex: none; width: 42px; flex-direction: column; padding-top: 4px; }
.big svg { width: 28px; height: 28px; margin-bottom: 6px; }
.big .caret { margin: 3px 0 0; }
.w56 { width: 56px; } .w64 { width: 64px; } .w52 { width: 52px; } .w60 { width: 60px; }
.mini { display: grid; grid-auto-rows: 23px; padding-left: 3px; }

.pickers { flex: none; height: 27px; display: flex; align-items: flex-start; background: #c9cbd2; padding-top: 2px; border-bottom: 1px solid #94969c; }
.pick { position: relative; width: 100px; height: 23px; background: #fff; border: 1px solid #a8a8ac; border-left-width: 2px; }
.pick.edge { width: 6px; border-left: 0; }
.pick select { appearance: none; width: 100%; height: 100%; border: 0; padding: 0 3px; font: inherit; color: inherit; background: none; }
.pick .caret { position: absolute; right: 4px; top: 9px; }

/* work area */
.work { flex: 1; min-height: 0; display: flex; background: #fff; }
.cap { flex: none; height: 13px; background: #d5d6db; display: flex; justify-content: flex-end; align-items: center; padding-right: 4px; }
.cap svg { width: 8px; height: 8px; }
.scroller { flex: 1; min-height: 0; display: flex; overflow: hidden; }

.nav { flex: none; width: 114px; overflow: hidden; border-right: 1px solid #bbb; display: flex; flex-direction: column; }
.navtitle { height: 22px; background: #f0eef0; border-bottom: 1px solid #c8c8cc; }
.navtools { height: 28px; background: #f0eef0; border-bottom: 1px solid #c8c8cc; display: flex; justify-content: flex-end; align-items: center; gap: 4px; padding-right: 1px; }
.navtools button { width: 24px; height: 22px; border: 1px solid #7fb6d8; border-radius: 3px; background: #eaf5fc; justify-content: center; }
.nav ul { padding-top: 99px; margin-left: -31px; }
.nav li { height: 21px; line-height: 21px; margin-bottom: 3px; width: 70px; white-space: nowrap; }
.nav li.on { background: #c6d6f0; }

.dock { flex: none; width: 284px; padding-left: 4px; display: flex; flex-direction: column; gap: 4px; }
.panel { display: flex; flex-direction: column; border: 1px solid #c0c1c6; border-top: 0; min-height: 0; }
.drawings { flex: 0 0 339px; }
.props { flex: 1; }
.ptabs { flex: none; display: flex; height: 23px; background: #f0eef0; border-bottom: 1px solid #c8c8cc; }
.ptabs button { width: 65px; justify-content: center; background: #dfdfe2; color: #888; border-right: 1px solid #c8c8cc; }
.ptabs button.on { background: #f3f2f4; color: #1c1c1c; font-weight: 500; }
.ptools { flex: none; height: 28px; display: flex; align-items: center; background: #f0eef0; border-bottom: 1px solid #c8c8cc; padding-left: 5px; gap: 8px; }
.ptools button { gap: 3px; color: #333; }
.ptools .caret { margin-left: 3px; }
th { font-weight: 400; background: #f0eef0; color: #333; }
th, td { height: 21px; padding: 0; line-height: 20px; border-right: 1px solid #d0d0d4; border-bottom: 1px solid #d0d0d4; white-space: nowrap; overflow: hidden; }
.sheet { width: 265px; flex: none; align-self: flex-start; }
.sheet th { height: 25px; }
.sheet .hot, .layers .hot { background: #7fb9f9; color: #fff; font-weight: 700; }
.c1 { width: 171px; } .c2 { width: 36px; } .c3 { width: 58px; }
.sheet td:nth-child(2) svg { width: 12px; height: 14px; margin: 0 auto; }
.sheet td:nth-child(3) { padding-left: 4px; border-right: 0; }
.sheet th:last-child { border-right: 0; padding-left: 4px; }
.sheet .leaf { padding-left: 31px; background: linear-gradient(#ddd, #ddd) 8px 0 / 1px 100% no-repeat, linear-gradient(#ddd, #ddd) 8px 50% / 16px 1px no-repeat; }
.sheet .leaf.last { background-size: 1px 50%, 16px 1px; }
.sheet .sel td { background: #d8e9fb; }
.sheet .sel td:first-child { outline: 2px solid #808a96; outline-offset: -2px; }
.branch { padding-left: 2px; border-right: 0; }
.fold { display: inline-block; vertical-align: -2px; position: relative; width: 12px; height: 12px; border: 1px solid #777; border-radius: 2px; background: #fff; margin-right: 6px; }
.fold::before { content: ""; position: absolute; left: 2px; top: 4px; width: 6px; height: 1px; background: #444; }
.vbar { flex: 1; display: flex; justify-content: center; }
.vbar span { width: 8px; border-radius: 4px; background: #c9c9cc; }
.v1 span { height: 88px; margin-top: 135px; }
.v2 span { height: 297px; margin-top: 15px; }
.hbar { flex: none; height: 12px; padding: 1px 0 0 14px; }
.hbar span { display: block; width: 157px; height: 8px; border-radius: 4px; background: #c9c9cc; }

.attr { width: 263px; flex: none; align-self: flex-start; }
.n { width: 22px; } .k { width: 101px; } .v { width: 99px; } .a { width: 41px; }
.attr td:nth-child(2) { padding-left: 3px; color: #2f5f9e; }
.attr td:nth-child(2).own { color: #1c1c1c; }
.attr td:nth-child(3) { padding-left: 3px; }
.attr td:nth-child(4) { text-align: center; }
.attr .dim { background: #e9e9ea; color: #999; }
.rebar { display: inline-block; width: 11px; height: 11px; margin: 0 1px; vertical-align: 0; }
input[type=checkbox] { appearance: none; position: relative; display: block; width: 14px; height: 14px; margin: 0 auto; border: 1px solid #808080; border-radius: 3px; background: #fff; }
input[type=checkbox]:checked { background: #5ba3e6; border-color: #4d93d6; }
input[type=checkbox]:checked::after { content: ""; position: absolute; left: 3px; top: 2px; width: 6px; height: 3px; border: solid #fff; border-width: 0 0 2px 2px; transform: rotate(-45deg); }
input[type=checkbox].mixed { background: #94c2ee; border-color: #5b7fa0; box-shadow: inset 0 0 0 1px #fff; }
.pfoot { flex: none; height: 31px; background: #f0eef0; border-top: 1px solid #c8c8cc; padding: 4px 0 0 5px; }
.pfoot button { width: 80px; height: 24px; justify-content: center; background: #fff; border: 1px solid #c4c4c8; border-radius: 3px; }

.split { flex: none; width: 4px; display: flex; align-items: center; }
.split span { width: 4px; height: 100px; background: #666b75; }

/* drawing */
.canvas { flex: 1; min-width: 0; position: relative; background: #000; overflow: hidden; }
.cad { width: 100%; height: 100%; }
.t { font: 300 20px "Roboto Condensed", "Liberation Sans Narrow", "Liberation Sans", sans-serif; fill: #ececec; }
.t.red { fill: #a81c22; }
.t.yel { fill: #dcdc86; }
.t .big-l { font-size: 40px; font-weight: 100; font-family: Roboto, sans-serif; }
.cn { font: 300 14px "Noto Sans CJK SC", sans-serif; fill: #fff; }
.cn .note { font-size: 8px; }
.axis { font: 500 16px "Noto Sans", sans-serif; fill: #fff; text-anchor: middle; }
.ax { font: 15px "Noto Sans", sans-serif; text-anchor: middle; }
.palette { position: absolute; right: 0; top: 0; width: 33px; height: 226px; background: #92959c; display: flex; flex-direction: column; align-items: center; padding-top: 10px; }
.palette svg { width: 24px; height: 24px; }
.palette button { margin-bottom: 5px; }
.palette .caret { margin: 0 0 6px; border-top-color: #333; }
.palette hr { width: 24px; border: 0; border-top: 1px solid #555; margin-bottom: 4px; }

/* display settings */
.display { flex: none; width: 204px; display: flex; flex-direction: column; overflow: hidden; border-left: 1px solid #bbb; background: #fff; }
.display h2 { flex: none; height: 23px; line-height: 20px; padding-left: 8px; background: #f0eef0; color: #666; }
.dtabs { flex: none; height: 28px; display: flex; align-items: flex-end; gap: 4px; background: #f0eef0; border-bottom: 2px solid #d8d8dc; padding-left: 2px; }
.dtabs button { width: 75px; height: 23px; justify-content: center; background: #dcdce0; color: #555; border-radius: 3px 3px 0 0; }
.dtabs .on { background: #fff; color: #3d93bd; }
.layers { width: 221px; flex: none; margin-left: 3px; align-self: flex-start; border-left: 1px solid #c8c8cc; }
.l { width: 151px; } .s { width: 70px; }
.layers th { height: 23px; line-height: 22px; }
.layers .hot { text-align: left; padding-left: 7px; }
.layers td:nth-child(2) { padding-right: 7px; }
.layers .d0 { padding-left: 2px; }
.layers .d1 { padding-left: 12px; background: linear-gradient(#ddd, #ddd) 7px 0 / 1px 100% no-repeat; }
.layers .d2 { padding-left: 40px; background: linear-gradient(#ddd, #ddd) 7px 0 / 1px 100% no-repeat, linear-gradient(#ddd, #ddd) 18px 0 / 1px 100% no-repeat, linear-gradient(#ddd, #ddd) 18px 50% / 15px 1px no-repeat; }
.layers .d2.last { background-size: 1px 100%, 1px 50%, 15px 1px; }
.cur td:nth-child(2) { outline: 2px solid #808080; outline-offset: -2px; }
.dfoot { flex: none; height: 40px; border-top: 1px solid #b8b8bc; border-bottom: 2px solid #d0d0d4; display: flex; justify-content: flex-end; padding-top: 6px; }
.dfoot button { width: 3px; height: 24px; border: 1px solid #bbb; border-right: 0; border-radius: 3px 0 0 3px; }

/* status */
.status { flex: none; height: 30px; display: flex; align-items: center; background: #dfdde1; border-bottom: 2px solid #14181e; padding-top: 3px; white-space: nowrap; overflow: hidden; color: #222; }
.status > span { flex: none; }
.s-pos { width: 173px; margin-left: -4px; }
.s-h { width: 83px; } .s-e { width: 133px; } .s-n { width: 103px; } .s-x { width: 103px; }
.modes { display: flex; gap: 4px; margin-right: 7px; }
.modes button { height: 24px; padding: 0 5px; border: 1px solid #a0a0a4; background: #cfcdd2; }
.modes .m24 { width: 25px; padding: 0 4px; }
.modes .m35 { width: 36px; padding: 0 4px; }
.modes .m35 .caret { margin-left: 4px; }
.modes .on { background: #fff; border-color: #4a8fc8; }

/* task bar */
.taskbar { flex: none; height: 40px; display: flex; align-items: center; gap: 4px; background: linear-gradient(#93a5bb, #8094ae 8%, #8094ae); overflow: hidden; }
.orb { width: 22px; height: 38px; background: radial-gradient(circle at -6px 18px, #8fdc4a 9px, #3f9f22 12px, #e8f4e0 13px, transparent 14px); }
.task { width: 158px; height: 38px; padding-left: 8px; gap: 4px; color: #fff; font-size: 13px; border: 1px solid #dce4ee; border-radius: 3px; box-shadow: 0 0 0 1px #4c5c72; background: linear-gradient(160deg, #b7c3d3, #8ea0b8 50%, #8699b2); }
.task.live { background: linear-gradient(160deg, #d0d8e2, #a9b6c8 50%, #9fafc3); }
.task svg { width: 32px; height: 32px; }
.tray { margin-left: auto; display: flex; align-items: center; gap: 8px; width: 267px; flex: none; height: 40px; color: #fff; overflow: hidden; }
.tray svg { width: 15px; }
.tray .tall { height: 24px; }
.ime { font: 12px "Liberation Mono", monospace; width: 14px; margin-bottom: 6px; }
.clock { align-self: flex-end; padding: 0 0 2px 14px; white-space: nowrap; }
```
